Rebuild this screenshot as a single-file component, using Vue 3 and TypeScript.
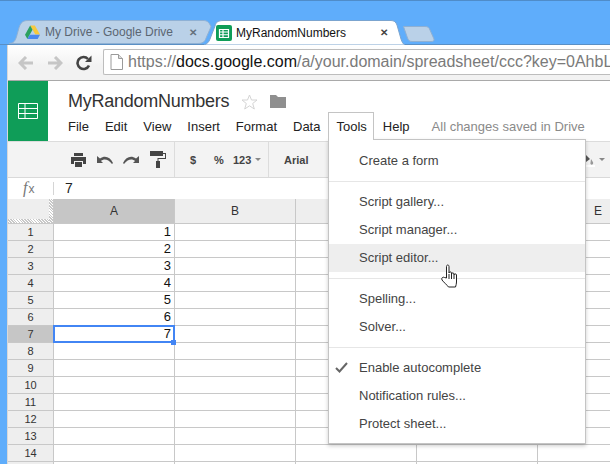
<script setup lang="ts">
interface MenuItem {
  label?: string
  hover?: boolean
  checked?: boolean
  separator?: boolean
}

const menuBar = ['File', 'Edit', 'View', 'Insert', 'Format', 'Data']

const toolsMenu: MenuItem[] = [
  { label: 'Create a form' },
  { separator: true },
  { label: 'Script gallery...' },
  { label: 'Script manager...' },
  { label: 'Script editor...', hover: true },
  { separator: true },
  { label: 'Spelling...' },
  { label: 'Solver...' },
  { separator: true },
  { label: 'Enable autocomplete', checked: true },
  { label: 'Notification rules...' },
  { label: 'Protect sheet...' },
]

const columns = ['A', 'B', '', '', 'E']
const rows = Array.from({ length: 15 }, (_, i) => i + 1)

function cellValue(row: number, col: number) {
  return col === 0 && row <= 7 ? String(row) : ''
}

// the last row only peeks in at the bottom edge, its number is out of view
function rowLabel(row: number) {
  return row < 15 ? String(row) : ''
}
</script>

<template>
  <div class="window">
    <div class="tabstrip">
      <div class="tab tab--back">
        <svg class="tab-shape" width="203" height="24" viewBox="0 0 203 25" preserveAspectRatio="none">
          <path d="M0 24.500 C7 24 7 19 10 8 C12 2 14 0.500 20 0.500 H194 C198 0.500 200 2 202 7 L197 19 C195.500 23 194 24.500 188 24.500 Z" fill="#bad1e8" stroke="#8fb0d3" />
        </svg>
        <svg class="favicon" width="17" height="15" viewBox="0 0 17 16">
          <path d="M6 0.500 H11 L16.500 10 H11.500 Z" fill="#f7c93c" />
          <path d="M6 0.500 L8.500 5 L3 15 L0.500 10.500 Z" fill="#2ba160" />
          <path d="M5.500 10.500 H16.500 L14 15 H3 Z" fill="#4a88ee" />
        </svg>
        <span class="tab-title">My Drive - Google Drive</span>
        <span class="tab-close tab-close--dim">✕</span>
      </div>
      <div class="tab tab--front">
        <svg class="tab-shape" width="204" height="25" viewBox="0 0 204 25">
          <path d="M0 25 C3 24 5 22 6 19 L11 6 C12 2 14 0.500 20 0.500 H187 C190 0.500 192 2 193 5 L197 19 C198 22 199 24 201 25 Z" fill="#fff" stroke="#7ba4cf" />
        </svg>
        <svg class="favicon" width="16" height="16" viewBox="0 0 16 16">
          <rect width="16" height="16" rx="2" fill="#0f9d58" />
          <path d="M3.500 4.500 H12.500 V12.500 H3.500 Z M3.500 7 H12.500 M3.500 9.750 H12.500 M7 4.500 V12.500" fill="none" stroke="#fff" stroke-width="1.200" />
        </svg>
        <span class="tab-title tab-title--active">MyRandomNumbers</span>
        <span class="tab-close">✕</span>
      </div>
      <svg class="new-tab" width="32" height="16" viewBox="0 0 32 16">
        <path d="M0.500 0.500 H22 C25 0.500 26 1.500 27 4 L31 13 C31.500 15 30 15.500 28 15.500 H9 C6 15.500 5.500 14 4.500 12 Z" fill="#bad1e8" stroke="#8fb0d3" />
      </svg>
    </div>

    <div class="content">
      <div class="browserbar">
        <svg class="nav" width="16" height="14" viewBox="0 0 16 14">
          <path d="M8 1 L2 7 L8 13 M2 7 H15" fill="none" stroke="#c6c6c6" stroke-width="3" />
        </svg>
        <svg class="nav" width="16" height="14" viewBox="0 0 16 14">
          <path d="M8 1 L14 7 L8 13 M14 7 H1" fill="none" stroke="#c6c6c6" stroke-width="3" />
        </svg>
        <svg class="nav" width="16" height="16" viewBox="0 0 16 16">
          <path d="M13 10.500 A6 6 0 1 1 12 4" fill="none" stroke="#444" stroke-width="2.600" />
          <path d="M9 7 H15.500 V0.500 Z" fill="#444" />
        </svg>
        <div class="urlbox">
          <svg class="page-icon" width="13" height="16" viewBox="0 0 13 16">
            <path d="M1 0.500 H8.500 L12.500 4.500 V15.500 H1 Z" fill="#fff" stroke="#9a9a9a" />
            <path d="M8.500 0.500 V4.500 H12.500" fill="#ddd" stroke="#9a9a9a" />
          </svg>
          <span class="url"><span class="url-dim">https://</span>docs.google.com<span class="url-dim">/a/your.domain/spreadsheet/ccc?key=0AhbLo</span></span>
        </div>
      </div>

      <div class="docs">
        <header class="doc-head">
          <div class="logo">
            <svg width="20" height="16" viewBox="0 0 20 16">
              <path d="M0.500 0.500 H19.500 V15.500 H0.500 Z M0.500 5.500 H19.500 M0.500 10.500 H19.500 M7 0.500 V15.500" fill="none" stroke="#fff" />
            </svg>
          </div>
          <div class="doc-info">
            <div class="title-row">
              <span class="doc-title">MyRandomNumbers</span>
              <svg width="17" height="16" viewBox="0 0 17 16">
                <path d="M8.500 1 L10.500 6 H16 L11.700 9.500 L13.300 15 L8.500 11.800 L3.700 15 L5.300 9.500 L1 6 H6.500 Z" fill="#fff" stroke="#d4d4d4" />
              </svg>
              <svg width="16" height="13" viewBox="0 0 16 13">
                <path d="M0 0 H6 L8 2 H16 V13 H0 Z" fill="#8f8f8f" />
              </svg>
            </div>
            <nav class="menubar">
              <span v-for="item in menuBar" :key="item" class="menubar-item">{{ item }}</span>
              <span class="menubar-item menubar-item--open">Tools</span>
              <span class="menubar-item">Help</span>
              <span class="saved">All changes saved in Drive</span>
            </nav>
          </div>
        </header>

        <div class="toolbar">
          <div class="tool-group tool-group--icons">
            <svg width="15" height="14" viewBox="0 0 15 14">
              <path d="M3 0 H12 V3 H3 Z M0 4 H15 V11 H12 V8 H3 V11 H0 Z M4 9 H11 V14 H4 Z" fill="#444" />
            </svg>
            <svg width="16" height="8" viewBox="0 0 16 8">
              <path d="M0 0 V7 H6 L4 5 C7 2.500 11 3 15 8 L16 7 C13 1 8 -1 3 2.500 Z" fill="#555" />
            </svg>
            <svg width="16" height="8" viewBox="0 0 16 8">
              <path d="M16 0 V7 H10 L12 5 C9 2.500 5 3 1 8 L0 7 C3 1 8 -1 13 2.500 Z" fill="#555" />
            </svg>
            <svg width="16" height="17" viewBox="0 0 16 17">
              <path d="M0 0 H13 V5 H0 Z M13 2 H16 V8 H8.500 V10 H10 V17 H6 V10 H7.500 V7 H15 V3 H13 Z" fill="#444" />
            </svg>
          </div>
          <div class="tool-group tool-group--format">
            <span class="tool-text tool-dollar">$</span>
            <span class="tool-text tool-percent">%</span>
            <span class="tool-text">123</span>
            <i class="caret" />
          </div>
          <div class="tool-group tool-group--font">
            <span class="tool-text">Arial</span>
          </div>
          <div class="tool-fill">
            <svg width="12" height="14" viewBox="0 0 12 14">
              <path d="M1 0 L7 6 L3 9 Z" fill="#555" />
              <path d="M8 6 C10 9 11 10 9.500 11.500 C8 12 7 11 7.500 9.500 Z" fill="#999" />
              <rect x="0" y="12" width="12" height="2" fill="#fff" />
            </svg>
            <i class="caret" />
          </div>
        </div>

        <div class="formula">
          <span class="fx"><i>f</i><small>x</small></span>
          <span class="formula-div" />
          <span class="formula-value">7</span>
        </div>

        <div class="sheet">
          <div class="corner" />
          <div
            v-for="(col, c) in columns"
            :key="c"
            class="col-head"
            :class="{ 'col-head--active': c === 0 }"
          >{{ col }}</div>
          <template v-for="row in rows" :key="row">
            <div class="row-head" :class="{ 'row-head--active': row === 7 }">{{ rowLabel(row) }}</div>
            <div
              v-for="(_, c) in columns"
              :key="c"
              class="cell"
              :class="{ 'cell--selected': row === 7 && c === 0 }"
            >
              {{ cellValue(row, c) }}
              <template v-if="row === 7 && c === 0">
                <span class="selection" />
                <span class="handle" />
              </template>
            </div>
          </template>
        </div>
      </div>
    </div>

    <div class="dropdown">
      <template v-for="(item, i) in toolsMenu" :key="i">
        <div v-if="item.separator" class="dropdown-sep" />
        <div v-else class="dropdown-item" :class="{ 'dropdown-item--hover': item.hover }">
          <svg v-if="item.checked" class="check" width="13" height="11" viewBox="0 0 13 11">
            <path d="M1 6 L4.500 9.500 L12 1" fill="none" stroke="#666" stroke-width="2" />
          </svg>
          {{ item.label }}
        </div>
      </template>
    </div>

    <svg class="hand" width="18" height="24" viewBox="0 0 18 24">
      <path
        d="M5.500 14 V2.500 C5.500 0.500 8 0.500 8 2.500 V9 C8 7.500 10.500 7.500 10.500 9 V10 C10.500 8.500 13 8.500 13 10 V11 C13 9.500 15.500 9.500 15.500 11 V18 C15.500 20 15 21 14.500 23 H7.500 C6 21 3 18.500 1 16 C0 14 2 12.500 3.500 13.500 Z"
        fill="#fff"
        stroke="#222"
        stroke-linejoin="round"
      />
      <path d="M8 10 V15 M10.500 10 V15 M13 11 V15" fill="none" stroke="#222" />
    </svg>
  </div>
</template>

<style>
html,
body {
  margin: 0;
  background: #5fadfb;
}
</style>

<style scoped>
.window {
  position: relative;
  width: 610px;
  height: 464px;
  overflow: hidden;
  box-sizing: border-box;
  border-top: 1px solid #4f8cc9;
  background: #5fadfb;
  color: #222;
  font-family: "Liberation Sans", Arial, sans-serif;
}

.tabstrip {
  display: flex;
  align-items: flex-end;
  height: 44px;
  padding-left: 9px;
  box-sizing: border-box;
  border-bottom: 1px solid #5a8fc4;
}

.tab {
  position: relative;
  display: flex;
  align-items: center;
  height: 24px;
  box-sizing: border-box;
  font-size: 12px;
}

.tab-shape {
  position: absolute;
  top: 0;
  left: 0;
}

.tab--back {
  width: 203px;
  padding-left: 15px;
}

.tab--front {
  width: 191px;
  height: 25px;
  margin-bottom: -1px;
  padding-left: 12px;
  margin-left: -8px;
}

.favicon,
.tab-title,
.tab-close {
  position: relative;
}

.tab-title {
  margin-left: 4px;
  color: #5b6672;
  white-space: nowrap;
}

.tab-title--active {
  margin-left: 4px;
  color: #111;
}

.tab--back .tab-title {
  width: 144px;
}

.tab--front .tab-title {
  width: 144px;
}

.tab-close {
  font-size: 10px;
  font-weight: 700;
  color: #444;
}

.tab-close--dim {
  color: #64707c;
}

.new-tab {
  margin: 0 0 2px 8px;
}

.content {
  margin-left: 7px;
  height: 419px;
  border-left: 1px solid #d8d8d8;
  overflow: hidden;
  background: #fff;
}

.browserbar {
  display: flex;
  align-items: center;
  height: 36px;
  box-sizing: border-box;
  padding-left: 10px;
  border-bottom: 1px solid #a9a9a9;
  background: linear-gradient(#fff, #f2f2f2 60%);
}

.nav {
  margin-right: 13px;
  flex: none;
}

.urlbox {
  display: flex;
  align-items: center;
  gap: 5px;
  flex: 1;
  min-width: 0;
  height: 26px;
  margin: -1px 0 0 -2px;
  padding-left: 6px;
  box-sizing: border-box;
  border: 1px solid #bdbdbd;
  border-right: 0;
  border-radius: 2px 0 0 2px;
  background: #fff;
  overflow: hidden;
}

.page-icon {
  flex: none;
}

.url {
  font-size: 16px;
  color: #111;
  white-space: nowrap;
}

.url-dim {
  color: #7a7a7a;
}

.doc-head {
  display: flex;
  height: 60px;
  border-bottom: 1px solid #dcdcdc;
}

.logo {
  display: flex;
  align-items: center;
  justify-content: center;
  width: 40px;
  height: 60px;
  background: #0f9d58;
}

.doc-info {
  padding-left: 20px;
}

.title-row {
  display: flex;
  align-items: center;
  gap: 12px;
  height: 35px;
  padding-top: 6px;
  box-sizing: border-box;
}

.doc-title {
  font-size: 18px;
  letter-spacing: -0.25px;
  color: #333;
}

.menubar {
  display: flex;
  align-items: center;
  height: 21px;
  font-size: 13px;
  color: #222;
}

.menubar-item {
  padding: 0 8px;
  white-space: nowrap;
}

.menubar-item:first-child {
  padding-left: 0;
}

.menubar-item--open {
  position: relative;
  z-index: 3;
}

.saved {
  margin-left: 14px;
  color: #8a8a8a;
  white-space: nowrap;
}

.toolbar {
  display: flex;
  align-items: center;
  height: 35px;
  border-bottom: 1px solid #d9d9d9;
  background: #f3f3f3;
}

.tool-group {
  display: flex;
  align-items: center;
  height: 100%;
  box-sizing: border-box;
  border-right: 1px solid #dcdcdc;
}

.tool-group--icons {
  width: 167px;
  padding-left: 63px;
  gap: 10.500px;
}

.tool-group--format {
  width: 94px;
  padding-left: 15px;
}

.tool-group--font {
  padding-left: 15px;
  width: 60px;
  border-right: 0;
}

.tool-text {
  font-size: 11px;
  font-weight: 700;
  color: #444;
}

.tool-dollar {
  width: 24px;
}

.tool-percent {
  width: 19px;
}

.caret {
  margin-left: 4px;
  width: 0;
  height: 0;
  border: 3px solid transparent;
  border-top: 3px solid #888;
  border-bottom: 0;
}

.tool-fill {
  display: flex;
  align-items: center;
  margin-left: auto;
  padding-right: 5px;
}

.formula {
  display: flex;
  align-items: center;
  height: 21px;
  padding-bottom: 1px;
  box-sizing: border-box;
  background: #fff;
}

.fx {
  width: 45px;
  padding-left: 15px;
  box-sizing: border-box;
  font-family: "Liberation Serif", serif;
  font-size: 16px;
  color: #777;
}

.fx small {
  margin-left: 1px;
  font-family: "Liberation Sans", sans-serif;
  font-size: 12px;
}

.formula-div {
  width: 1px;
  height: 13px;
  background: #d5d5d5;
}

.formula-value {
  margin-left: 11px;
  font-size: 14px;
  color: #222;
}

.sheet {
  display: grid;
  grid-template-columns: 46px repeat(5, 121px);
  grid-template-rows: 25px;
  grid-auto-rows: 17px;
  font-size: 12px;
}

.corner,
.col-head,
.row-head,
.cell {
  box-sizing: border-box;
  border-right: 1px solid #c8c8c8;
  border-bottom: 1px solid #c8c8c8;
}

.corner {
  background:
    repeating-linear-gradient(45deg, #c8c8c8 0 1px, #fff 1px 2px) right / 4px 100% no-repeat,
    repeating-linear-gradient(45deg, #c8c8c8 0 1px, #fff 1px 2px) bottom / 100% 4px no-repeat,
    #eee;
}

.col-head {
  display: flex;
  align-items: center;
  justify-content: center;
  background: #eee;
  color: #333;
}

.col-head--active {
  background: #c6c6c6;
}

.row-head {
  display: flex;
  align-items: center;
  justify-content: center;
  background: #eee;
  color: #333;
  font-size: 11px;
}

.row-head--active {
  background: #c6c6c6;
}

.cell {
  position: relative;
  padding-right: 3px;
  font-size: 13px;
  line-height: 16px;
  text-align: right;
  color: #111;
  background: #fff;
}

.cell--selected {
  z-index: 1;
}

.selection {
  position: absolute;
  top: -1px;
  left: -1px;
  right: -1px;
  bottom: -1px;
  border: 2px solid #4285f4;
}

.handle {
  position: absolute;
  right: -2px;
  bottom: -3px;
  width: 5px;
  height: 5px;
  background: #4285f4;
}

.dropdown {
  position: absolute;
  top: 138px;
  left: 328px;
  width: 258px;
  height: 305px;
  box-sizing: border-box;
  padding: 7px 0 5px;
  border: 1px solid #c4c4c4;
  background: #fff;
  box-shadow: 0 2px 4px rgba(0, 0, 0, 0.2);
  z-index: 2;
}

.dropdown::before {
  content: "";
  position: absolute;
  top: -28px;
  left: -1px;
  width: 46px;
  height: 28px;
  box-sizing: border-box;
  border: 1px solid #c4c4c4;
  border-bottom: 0;
  background: #fff;
}

.dropdown-item {
  position: relative;
  height: 28px;
  padding-left: 30px;
  font-size: 13px;
  line-height: 28px;
  color: #444;
}

.dropdown-item--hover {
  background: #eee;
}

.dropdown-sep {
  height: 1px;
  margin: 6px 0;
  background: #e6e6e6;
}

.check {
  position: absolute;
  top: 8px;
  left: 6px;
}

.hand {
  position: absolute;
  top: 263px;
  left: 441px;
  z-index: 4;
}
</style>
